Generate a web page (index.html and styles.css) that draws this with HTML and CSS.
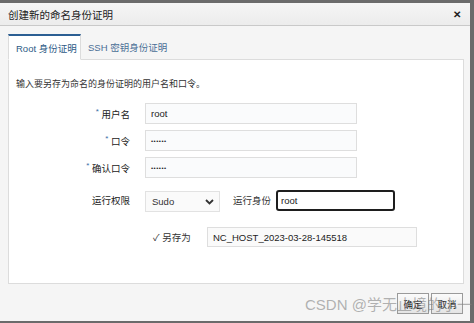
FILE: index.html
```html
<!DOCTYPE html>
<html lang="zh">
<head>
<meta charset="utf-8">
<link rel="stylesheet" href="styles.css">
</head>
<body>
<div class="dialog">
  <div class="titlebar">
    <span class="title">创建新的命名身份证明</span>
    <span class="close">&#x2715;</span>
  </div>
  <div class="content">
    <div class="tabs">
      <div class="tab active">Root 身份证明</div>
      <div class="tab">SSH 密钥身份证明</div>
    </div>
    <div class="panel">
      <p class="intro">输入要另存为命名的身份证明的用户名和口令。</p>
      <div class="form">
        <label class="lbl"><span class="star">*</span> 用户名</label>
        <div class="field wide">root</div>
        <label class="lbl"><span class="star">*</span> 口令</label>
        <div class="field wide dots">••••••</div>
        <label class="lbl"><span class="star">*</span> 确认口令</label>
        <div class="field wide dots">••••••</div>
        <label class="lbl row4">运行权限</label>
        <div class="row4 runrow">
          <div class="select">Sudo<svg class="chev" width="9" height="6" viewBox="0 0 9 6"><path d="M1 1 L4.5 4.5 L8 1" fill="none" stroke="#333" stroke-width="1.8"/></svg></div>
          <span class="runlbl">运行身份</span>
          <div class="field focus">root</div>
        </div>
        <div class="saveas">
          <span class="check">✓ 另存为</span>
          <div class="field name">NC_HOST_2023-03-28-145518</div>
        </div>
      </div>
    </div>
    <div class="buttons">
      <button class="btn">确定</button>
      <button class="btn">取消</button>
    </div>
  </div>
  <div class="watermark">CSDN @学无止境的小一</div>
</div>
</body>
</html>
```

FILE: styles.css
```css
html, body {
  margin: 0;
  padding: 0;
  background: #6b6b6b;
  width: 474px;
  height: 323px;
  overflow: hidden;
  font-family: "Liberation Sans", "Noto Sans CJK SC", sans-serif;
  color: #333;
}
body {
  padding-top: 3px;
  box-sizing: border-box;
}
.dialog {
  position: relative;
  width: 470px;
  height: 318px;
  background: #f5f5f5;
  display: flex;
  flex-direction: column;
}
.titlebar {
  height: 22px;
  border-bottom: 1px solid #c9c9c9;
  background: linear-gradient(#f5f5f5, #ececec);
  display: flex;
  align-items: center;
  justify-content: space-between;
  padding: 0 8px;
}
.title {
  font-size: 10.5px;
  color: #222;
}
.close {
  font-size: 10px;
  font-weight: bold;
  color: #222;
  margin-right: 1px;
}
.content {
  padding: 8px 6px 0 8px;
  display: flex;
  flex-direction: column;
}
.tabs {
  display: flex;
  height: 26px;
  position: relative;
  z-index: 1;
  margin-bottom: -1px;
}
.tab {
  font-size: 9.5px;
  padding: 0 7px;
  display: flex;
  align-items: center;
  color: #4a6f95;
  box-sizing: border-box;
  white-space: nowrap;
}
.tab.active {
  width: 73px;
  background: #fff;
  border: 1px solid #dcdcdc;
  border-top: 2px solid #2c5f93;
  border-bottom: 1px solid #fff;
  color: #2d5a86;
  padding-left: 7px;
  padding-right: 0;
}
.panel {
  background: #fff;
  border: 1px solid #dcdcdc;
  height: 225px;
  box-sizing: border-box;
  padding: 17px 0 0 7px;
}
.intro {
  margin: 0;
  font-size: 9px;
  line-height: 14px;
  color: #333;
}
.form {
  margin-top: 12px;
  display: grid;
  grid-template-columns: 114px 1fr;
  column-gap: 15px;
  row-gap: 6px;
  font-size: 9px;
}
.lbl {
  text-align: right;
  align-self: center;
  font-size: 9.5px;
  color: #222;
}
.star {
  color: #3a6ea5;
  font-size: 8px;
  vertical-align: top;
}
.field {
  height: 21px;
  box-sizing: border-box;
  border: 1px solid #dedede;
  background: #fafbfc;
  font-size: 9.5px;
  display: flex;
  align-items: center;
  padding-left: 5px;
  color: #222;
}
.field.wide {
  width: 212px;
}
.dots {
  font-size: 6px;
  letter-spacing: 0.5px;
}
.row4 {
  margin-top: 4px;
}
.runrow {
  display: flex;
  align-items: center;
}
.select {
  width: 75px;
  height: 21px;
  box-sizing: border-box;
  border: 1px solid #e2e2e2;
  background: #fafafa;
  font-size: 9.5px;
  display: flex;
  align-items: center;
  justify-content: space-between;
  padding: 0 5px 0 6px;
  margin-top: 3px;
}
.runlbl {
  font-size: 9.5px;
  margin-left: 13px;
  margin-right: 5px;
}
.field.focus {
  width: 119px;
  border: 2px solid #1e1e1e;
  border-radius: 3px;
  background: #fff;
  padding-left: 3px;
}
.saveas {
  grid-column: 1 / 3;
  display: flex;
  align-items: center;
  margin-top: 9px;
  padding-left: 137px;
}
.check {
  font-size: 9.5px;
  width: 54px;
}
.field.name {
  width: 210px;
  height: 20px;
  padding-left: 5px;
  background: #fafafa;
}
.buttons {
  display: flex;
  justify-content: flex-end;
  gap: 2px;
  margin-top: 9px;
  padding-right: 1px;
}
.btn {
  font-family: "Noto Sans CJK SC", sans-serif;
  font-size: 9.5px;
  height: 21px;
  width: 32px;
  padding: 0;
  border: 1px solid #9a9a9a;
  background: linear-gradient(#fbfbfb, #e4e4e4);
  color: #222;
}
.watermark {
  position: absolute;
  left: 305px;
  top: 290px;
  font-size: 15px;
  color: rgba(130, 130, 130, 0.6);
  font-family: "Liberation Sans", "Noto Sans CJK SC", sans-serif;
  white-space: nowrap;
}
```
